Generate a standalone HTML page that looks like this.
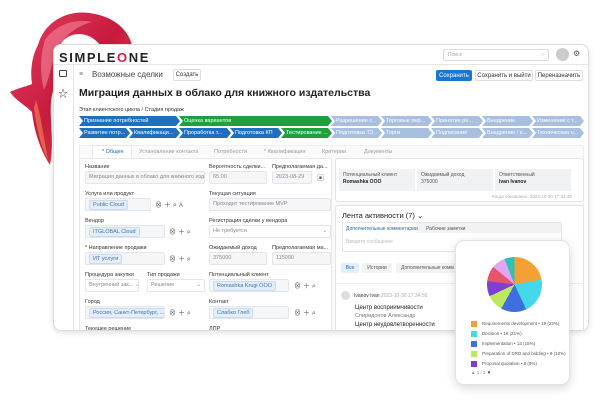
<!DOCTYPE html>
<html><head><meta charset="utf-8"><style>
*{box-sizing:border-box;margin:0;padding:0}
body{width:600px;height:400px;overflow:hidden;background:#fff;font-family:"Liberation Sans","Noto Sans CJK SC",sans-serif;position:relative;color:#222}
.a{position:absolute;white-space:nowrap}
.win{position:absolute;left:53px;top:44px;width:536px;height:287px;background:#fff;border:1px solid #ddd;border-radius:8px;box-shadow:0 2px 6px rgba(0,0,0,.12);overflow:hidden}
.btn{position:absolute;font-size:6px;border:1px solid #ddd;border-radius:2px;text-align:center;line-height:10px;background:#fff;color:#333}
.seg{position:absolute;height:10px;font-size:5.5px;color:#fff;line-height:10px;padding-left:5px;clip-path:polygon(0 0,calc(100% - 4px) 0,100% 50%,calc(100% - 4px) 100%,0 100%,4px 50%);overflow:hidden}
.b{background:#1f6fbf}.g{background:#1fa040}.s{background:#a9bfe0}
.lb{position:absolute;font-size:5.5px;color:#333;white-space:nowrap}
.in{position:absolute;height:13px;border:1px solid #e2e5ea;background:#f5f6f8;border-radius:2px;font-size:5.5px;color:#888;line-height:11px;padding-left:3px;white-space:nowrap;overflow:hidden}
.chip{display:inline-block;background:#e3eefb;border:1px solid #c8dbf2;color:#4a6ea0;border-radius:2px;padding:0 3px;line-height:8px;margin-top:1px}
.ic{position:absolute;font-size:7px;color:#555}
.card{position:absolute;border:1px solid #e4e4e4;border-radius:3px;background:#fff}
.gb{position:absolute;background:#f1f2f4;font-size:5px;color:#555;padding:3px 4px;line-height:7px}
.lg{position:absolute;left:15px;font-size:4.5px;color:#555;white-space:nowrap}
.lg i{display:inline-block;width:6px;height:6px;vertical-align:middle;margin-right:5px}
</style></head><body>
<svg class="a" style="left:0;top:0" width="140" height="180" viewBox="0 0 140 180">
<defs><linearGradient id="r" x1="0" y1="0" x2="1" y2="1"><stop offset="0" stop-color="#e0405e"/><stop offset=".5" stop-color="#c81a3e"/><stop offset="1" stop-color="#e86048"/></linearGradient></defs>
<path d="M38 45 C45 20 70 8 95 14 C115 18 128 30 132 45 L100 45 C90 32 72 30 62 42 C55 55 58 75 52 95 C48 115 55 140 50 165 C40 150 34 130 32 112 C25 105 15 100 10 92 C18 88 28 86 32 84 C30 70 32 56 38 45Z" fill="url(#r)"/>
<path d="M45 40 C55 25 75 18 92 22 C80 25 68 32 60 45 C52 58 50 78 44 90 C40 75 40 55 45 40Z" fill="#f07890" opacity=".7"/>
<path d="M36 100 C42 120 44 140 48 160 C40 145 36 125 34 108Z" fill="#e87050" opacity=".8"/>
</svg>
<div class="win">
<div class="a" style="left:5px;top:5px;font-size:13px;font-weight:bold;letter-spacing:1.6px;color:#222">SIMPLE<span style="color:#d0204a">O</span>NE</div>
<div class="a" style="left:389px;top:4px;width:106px;height:12px;border:1px solid #ddd;border-radius:2px;font-size:5px;color:#aaa;padding:2px 4px">Поиск<span style="float:right">○</span></div>
<div class="a" style="left:502px;top:3px;width:13px;height:13px;border-radius:50%;background:#ccc"></div>
<div class="a" style="left:519px;top:4px;font-size:8px;color:#555">⚙</div>
<div class="a" style="left:0;top:19px;width:536px;border-top:1px solid #e6e6e6"></div>
<div class="a" style="left:19px;top:19px;height:270px;border-left:1px solid #e6e6e6"></div>
<div class="a" style="left:5px;top:25px;width:8px;height:7px;border:1px solid #444;border-radius:1px"></div>
<div class="a" style="left:4px;top:40px;font-size:10px;color:#444">☆</div>
<div class="a" style="left:25px;top:26px;font-size:7px;color:#777">≡</div>
<div class="a" style="left:38px;top:25px;font-size:8px;color:#444">Возможные сделки</div>
<div class="btn" style="left:119px;top:24px;width:28px;height:12px">Создать</div>
<div class="btn" style="left:382px;top:25px;width:36px;height:11px;background:#1976d2;color:#fff;border-color:#1976d2">Сохранить</div>
<div class="btn" style="left:421px;top:25px;width:58px;height:11px">Сохранить и выйти</div>
<div class="btn" style="left:481px;top:25px;width:48px;height:11px">Переназначить</div>
<div class="a" style="left:25px;top:42px;font-size:10.5px;font-weight:bold;color:#222">Миграция данных в облако для книжного издательства</div>
<div class="a" style="left:25px;top:62px;font-size:5.5px;color:#333">Этап клиентского цикла / Стадия продаж</div>
<div class="seg b" style="left:25px;top:71px;width:101px">Признание потребностей</div>
<div class="seg g" style="left:125px;top:71px;width:153px">Оценка вариантов</div>
<div class="seg s" style="left:277px;top:71px;width:51px">Разрешение с...</div>
<div class="seg s" style="left:327px;top:71px;width:51px">Торговые пер...</div>
<div class="seg s" style="left:377px;top:71px;width:52px">Принятие ре...</div>
<div class="seg s" style="left:428px;top:71px;width:51px">Внедрение</div>
<div class="seg s" style="left:478px;top:71px;width:52px">Изменение с т...</div>
<div class="seg b" style="left:25px;top:83px;width:51px">Развитие потр...</div>
<div class="seg b" style="left:75px;top:83px;width:51px">Квалификаци...</div>
<div class="seg b" style="left:125px;top:83px;width:52px">Проработка т...</div>
<div class="seg b" style="left:176px;top:83px;width:52px">Подготовка КП</div>
<div class="seg g" style="left:227px;top:83px;width:51px">Тестирование ...</div>
<div class="seg s" style="left:277px;top:83px;width:51px">Подготовка ТЗ...</div>
<div class="seg s" style="left:327px;top:83px;width:51px">Торги</div>
<div class="seg s" style="left:377px;top:83px;width:52px">Подписание</div>
<div class="seg s" style="left:428px;top:83px;width:51px">Внедрение / к...</div>
<div class="seg s" style="left:478px;top:83px;width:52px">Техническая н...</div>
<div class="a" style="left:25px;top:100px;width:505px;height:190px;background:#fafafa;border:1px solid #eee"></div>
<div class="a" style="left:38px;top:100px;width:40px;height:13px;background:#fff;border:1px solid #e5e5e5;border-bottom:none"></div>
<div class="a" style="left:48px;top:104px;font-size:5.5px;color:#1b6ac0">* Общее</div>
<div class="a" style="left:85px;top:104px;font-size:5.5px;color:#999">Установление контакта</div>
<div class="a" style="left:160px;top:104px;font-size:5.5px;color:#999">Потребности</div>
<div class="a" style="left:210px;top:104px;font-size:5.5px;color:#999">* Квалификация</div>
<div class="a" style="left:268px;top:104px;font-size:5.5px;color:#999">Критерии</div>
<div class="a" style="left:310px;top:104px;font-size:5.5px;color:#999">Документы</div>
<div class="a" style="left:25px;top:113px;width:253px;height:177px;background:#fff;border:1px solid #e8e8e8"></div>
<div class="lb" style="left:31px;top:119px">Название</div>
<div class="in" style="left:31px;top:126px;width:120px">Миграция данных в облако для книжного изд</div>
<div class="lb" style="left:155px;top:119px">Вероятность сделки...</div>
<div class="in" style="left:155px;top:126px;width:58px">65.00</div>
<div class="lb" style="left:218px;top:119px">Предполагаемая да...</div>
<div class="in" style="left:218px;top:126px;width:40px">2023-08-29</div>
<div class="ic" style="left:263px;top:128px">▣</div>
<div class="lb" style="left:31px;top:146px">Услуга или продукт</div>
<div class="in" style="left:31px;top:153px;width:66px"><span class="chip">Public Cloud</span></div>
<div class="ic" style="left:101px;top:155px">⊗ ＋ ⌕ ⅄</div>
<div class="lb" style="left:155px;top:146px">Текущая ситуация</div>
<div class="in" style="left:155px;top:153px;width:122px">Проходит тестирование MVP</div>
<div class="lb" style="left:31px;top:173px">Вендор</div>
<div class="in" style="left:31px;top:180px;width:80px"><span class="chip">ITGLOBAL Cloud</span></div>
<div class="ic" style="left:115px;top:182px">⊗ ＋ ⌕</div>
<div class="lb" style="left:155px;top:173px">Регистрация сделки у вендора</div>
<div class="in" style="left:155px;top:180px;width:122px;background:#fff">Не требуется<span style="float:right;margin-right:3px">⌄</span></div>
<div class="lb" style="left:31px;top:200px">* Направление продажи</div>
<div class="in" style="left:31px;top:207px;width:80px"><span class="chip">ИТ услуги</span></div>
<div class="ic" style="left:115px;top:209px">⊗ ＋ ⌕</div>
<div class="lb" style="left:155px;top:200px">Ожидаемый доход</div>
<div class="in" style="left:155px;top:207px;width:58px">375000</div>
<div class="lb" style="left:218px;top:200px">Предполагаемая ма...</div>
<div class="in" style="left:218px;top:207px;width:59px">115000</div>
<div class="lb" style="left:31px;top:227px">Процедура закупки</div>
<div class="in" style="left:31px;top:234px;width:54px;background:#fff">Внутренний зак... ⌄</div>
<div class="lb" style="left:93px;top:227px">Тип продажи</div>
<div class="in" style="left:93px;top:234px;width:58px;background:#fff">Решение<span style="float:right;margin-right:3px">⌄</span></div>
<div class="lb" style="left:155px;top:227px">Потенциальный клиент</div>
<div class="in" style="left:155px;top:234px;width:80px"><span class="chip">Romashka Krugi OOO</span></div>
<div class="ic" style="left:240px;top:236px">⊗ ＋ ⌕</div>
<div class="lb" style="left:31px;top:254px">Город</div>
<div class="in" style="left:31px;top:261px;width:80px"><span class="chip">Россия, Санкт-Петербург, ...</span></div>
<div class="ic" style="left:115px;top:263px">⊗ ＋ ⌕</div>
<div class="lb" style="left:155px;top:254px">Контакт</div>
<div class="in" style="left:155px;top:261px;width:80px"><span class="chip">Слабко Глеб</span></div>
<div class="ic" style="left:240px;top:263px">⊗ ＋ ⌕</div>
<div class="lb" style="left:31px;top:281px">Текущее решение</div>
<div class="lb" style="left:155px;top:281px">ЛПР</div>
<div class="card" style="left:281px;top:113px;width:249px;height:44px"></div>
<div class="gb" style="left:285px;top:124px;width:76px;height:22px">Потенциальный клиент<br><b style="color:#222">Romashka OOO</b></div>
<div class="gb" style="left:363px;top:124px;width:76px;height:22px">Ожидаемый доход<br>375000</div>
<div class="gb" style="left:441px;top:124px;width:76px;height:22px">Ответственный<br><b style="color:#222">Ivan Ivanov</b></div>
<div class="a" style="left:438px;top:149px;font-size:4.5px;color:#aaa">Когда обновлено: 2023-10-30 17:34:49</div>
<div class="card" style="left:281px;top:160px;width:249px;height:130px"></div>
<div class="a" style="left:288px;top:166px;font-size:7.5px;color:#222">Лента активности (7) ⌄</div>
<div class="a" style="left:288px;top:177px;width:220px;height:30px;border:1px solid #e5e5e5;border-radius:2px"></div>
<div class="a" style="left:362px;top:178px;width:145px;height:10px;background:#f1f2f4"></div>
<div class="a" style="left:292px;top:181px;font-size:5px;color:#1b6ac0">Дополнительные комментарии</div>
<div class="a" style="left:372px;top:181px;font-size:5px;color:#555">Рабочие заметки</div>
<div class="a" style="left:292px;top:194px;font-size:5px;color:#bbb">Введите сообщение</div>
<div class="a" style="left:287px;top:218px;width:18px;height:10px;background:#e3eefb;border-radius:2px;font-size:5px;line-height:10px;text-align:center;color:#1b6ac0">Все</div>
<div class="a" style="left:308px;top:218px;width:30px;height:10px;background:#f1f2f4;border-radius:2px;font-size:5px;line-height:10px;text-align:center;color:#555">Истории</div>
<div class="a" style="left:342px;top:218px;width:70px;height:10px;background:#f1f2f4;border-radius:2px;font-size:5px;line-height:10px;padding-left:5px;color:#555">Дополнительные комм</div>
<div class="a" style="left:281px;top:238px;width:249px;border-top:1px solid #eee"></div>
<div class="a" style="left:287px;top:246px;width:9px;height:9px;border-radius:50%;background:#ddd"></div>
<div class="a" style="left:300px;top:248px;font-size:5px;color:#333">Ivanov Ivan <span style="color:#aaa">2023-10-30 17:34:50</span></div>
<div class="a" style="left:301px;top:260px;font-size:6px;color:#222">Центр восприимчивости</div>
<div class="a" style="left:301px;top:268px;font-size:5.5px;color:#777">Спиридонов Александр</div>
<div class="a" style="left:301px;top:277px;font-size:6px;color:#222">Центр неудовлетворенности</div>
</div>
<div class="a" style="left:455px;top:240px;width:115px;height:145px;background:#fff;border:1px solid #e2e2e2;border-radius:9px;box-shadow:0 3px 10px rgba(0,0,0,.15)">
<div class="a" style="left:31px;top:16px;width:55px;height:55px;border-radius:50%;background:conic-gradient(#f5a035 0 22%,#45d8ea 22% 43%,#3f6fdf 43% 58%,#bde860 58% 68%,#7b3fd3 68% 77%,#e8546a 77% 86%,#e2a6f0 86% 94%,#2fc2b4 94% 100%)"></div>
<div class="lg" style="top:80px"><i style="background:#f5a035"></i>Requirements development • 19 (22%)</div>
<div class="lg" style="top:90px"><i style="background:#45d8ea"></i>Decision • 18 (21%)</div>
<div class="lg" style="top:100px"><i style="background:#3f6fdf"></i>Implementation • 13 (15%)</div>
<div class="lg" style="top:110px"><i style="background:#bde860"></i>Preparation of DRD and bidding • 9 (10%)</div>
<div class="lg" style="top:120px"><i style="background:#7b3fd3"></i>Proposal quotation • 8 (9%)</div>
<div class="lg" style="top:129px;color:#888">▲ 1 / 2 <span style="color:#1b3a8a">▼</span></div>
</div>
</body></html>
